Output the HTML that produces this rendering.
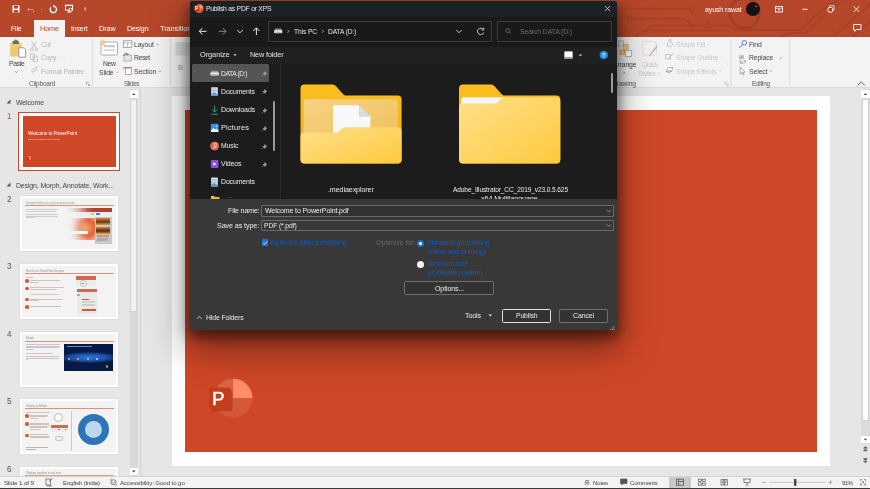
<!DOCTYPE html>
<html><head><meta charset="utf-8"><title>Publish as PDF or XPS</title>
<style>
*{box-sizing:border-box;margin:0;padding:0}
html,body{width:870px;height:489px;overflow:hidden;background:#e6e6e6;font-family:"Liberation Sans",sans-serif;font-size:7.4px;color:#444}
.abs{position:absolute}
#app{position:relative;width:870px;height:489px;overflow:hidden}
.t{position:absolute;white-space:nowrap;will-change:transform}
svg{position:absolute;overflow:visible}
</style></head><body>
<div id="app">
<div class="abs" style="left:0px;top:0px;width:870px;height:37px;background:#b7472a;"></div>
<svg style="left:600px;top:0" width="270" height="37" viewBox="600 0 270 37" fill="none" stroke="#a44027" stroke-width="1.500">
<path d="M617 8.400 H689.500"/><circle cx="692" cy="8.400" r="2.200"/>
<circle cx="629.400" cy="18.800" r="2.200"/><path d="M632 18.800 H684 L693 25.400 H706"/><circle cx="708.600" cy="25.400" r="2.200"/><path d="M711 25.400 H729 L734 30 H801 L819 12 L838 0"/>
<path d="M645 32 L652 25.400 H694"/>
<path d="M636 37 L643 30.500 H722"/>
<circle cx="744.500" cy="13" r="15" stroke-width="3"/><path d="M744.500 13 L752 5" stroke-width="2.500"/>
<path d="M780 37 L790 33 H806 L828 11 L846 0"/><path d="M833 37 L870 4"/><path d="M852 37 L870 21"/>
</svg>
<svg style="left:0;top:0" width="120" height="20" viewBox="0 0 120 20" fill="none" stroke="#fff" stroke-width="1">
<rect x="12.5" y="5.5" width="7" height="7" fill="#fff" stroke="none"/><rect x="14" y="6" width="4" height="2.6" fill="#b7472a" stroke="none"/><rect x="14" y="10" width="4" height="2.5" fill="#b7472a" stroke="none"/>
<path d="M29 8 l-1.5 1.5 1.5 1.5 M27.7 9.5 H33 a2 2 0 0 1 0 3.5" stroke="#d98a72"/>
<path d="M41 9.5 h1.5" stroke="#d98a72"/>
<path d="M54.3 6.4 a3.2 3.2 0 1 1 -3.3 0.9" stroke-width="1.3"/><path d="M53.4 4.6 l2 1.8 -2.4 0.9z" fill="#fff" stroke="none"/>
<rect x="65.5" y="5.5" width="7" height="4.6"/><path d="M64.8 5.2 H73.2 M69 10 v2.4 M67.3 13 l1.7 -1.7 1.7 1.7"/><circle cx="70.5" cy="9.8" r="1.6" fill="#b7472a"/>
<path d="M84.2 8 h2 M84.4 9.3 l0.8 0.9 0.8 -0.9" stroke-width="0.8"/>
</svg>
<div class="abs" style="left:34px;top:19.5px;width:30.5px;height:18px;background:#f3f3f3;"></div>
<span class="t" style="left:11.0px;top:25px;font-size:7.0px;line-height:7px;letter-spacing:-0.19px;color:#fff;">File</span>
<span class="t" style="left:39.5px;top:24px;font-size:7.3px;line-height:9px;letter-spacing:-0.12px;color:#b7472a;">Home</span>
<span class="t" style="left:70.5px;top:25px;font-size:7.0px;line-height:7px;letter-spacing:-0.17px;color:#fff;">Insert</span>
<span class="t" style="left:99.0px;top:24px;font-size:7.25px;line-height:9px;letter-spacing:-0.10px;color:#fff;">Draw</span>
<span class="t" style="left:127.0px;top:25px;font-size:7.1px;line-height:8px;letter-spacing:-0.10px;color:#fff;">Design</span>
<span class="t" style="left:160.0px;top:24px;font-size:7.45px;line-height:9px;letter-spacing:-0.11px;color:#fff;">Transitions</span>
<span class="t" style="left:705.0px;top:6px;font-size:7.0px;line-height:7px;letter-spacing:-0.11px;color:#fff;">ayush rawat</span>
<div class="abs" style="left:746px;top:2px;width:14px;height:14px;border-radius:50%;background:#161214"></div>
<svg style="left:740px;top:0" width="130" height="37" viewBox="0 0 130 37" fill="none" stroke="#fff" stroke-width="0.9">
<path d="M14 6 l3 -1 0 2.5z" fill="#b5402a" stroke="none"/>
<rect x="35.500" y="6.5" width="7" height="5.500"/><path d="M35.500 8.300 h7 M39 11.300 v-2 M38 10.200 l1 -1 1 1" stroke-width="0.7"/>
<path d="M62.500 9.300 h5"/>
<rect x="88" y="7.500" width="4.600" height="4.600" rx="1"/><path d="M89.500 7.300 v-1 a0.800 0.800 0 0 1 0.800 -0.800 h3 a0.800 0.800 0 0 1 0.800 0.800 v3 a0.800 0.800 0 0 1 -0.800 0.800 h-0.700" stroke-width="0.8"/>
<path d="M113.800 6.500 l5.400 5.400 M119.200 6.500 l-5.400 5.400"/>
<path d="M113.500 24.500 h7.500 v5 h-4.500 l-1.800 1.900 v-1.900 h-1.200z"/>
</svg>
<div class="abs" style="left:0px;top:37px;width:870px;height:51.2px;background:#f3f3f3;border-bottom:1px solid #dadada"></div>
<svg style="left:0;top:37px" width="200" height="52" viewBox="0 37 200 52" fill="none">
<rect x="10.200" y="42.600" width="11.400" height="14" rx="1" fill="#efc96d"/><rect x="12.600" y="40.800" width="6.400" height="3.200" rx="1" fill="#6b6b6b"/><circle cx="15.800" cy="40.800" r="1.300" fill="#6b6b6b"/>
<path d="M18.800 47.800 h4.800 l2 2 v7.400 h-6.800z" fill="#fff" stroke="#777" stroke-width="0.700"/>
<path d="M15.400 71.500 l1 1 1 -1" stroke="#555" stroke-width="0.800"/>
<path d="M31.500 41.500 l4.500 6.500 M36.500 41.500 l-4.500 6.500" stroke="#b8b8b8" stroke-width="0.900"/><circle cx="31.600" cy="49.400" r="1.300" stroke="#b8b8b8" stroke-width="0.800"/><circle cx="36.400" cy="49.400" r="1.300" stroke="#b8b8b8" stroke-width="0.800"/>
<path d="M30.500 54 h4 v5.500 h-4z M33 56 h4.500 v5.500 h-4.500z" fill="#f3f3f3" stroke="#bdbdbd" stroke-width="0.800"/>
<path d="M63.600 57.300 l0.900 0.900 0.900 -0.900" stroke="#c4c4c4" stroke-width="0.700"/>
<path d="M31.500 70.500 l4 -2.500 1.500 1.500 -4.500 3z M36 68 l2 -2" stroke="#bdbdbd" stroke-width="0.900"/>
<path d="M86.500 82.200 h2.500 M86.500 82.200 v2.500 M88 83.800 l1.600 1.600 M89.800 83.800 v1.800 h-1.800" stroke="#888" stroke-width="0.600"/>
<path d="M92.600 39 v47" stroke="#d4d4d4" stroke-width="0.800"/>
<path d="M170.600 39 v47" stroke="#d4d4d4" stroke-width="0.800"/>
<!-- new slide -->
<rect x="101" y="42" width="16.500" height="13" rx="1.200" fill="#fff" stroke="#9a9a9a" stroke-width="0.800"/><rect x="103.500" y="45" width="11.500" height="2.200" fill="#c9c9c9"/><rect x="103.500" y="49" width="11.500" height="2.200" fill="#dedede"/>
<path d="M102.700 39.700 l0.800 1.700 1.800 0.300 -1.300 1.300 0.300 1.800 -1.600 -0.900 -1.600 0.900 0.300 -1.800 -1.300 -1.300 1.800 -0.300z" fill="#f6d58a" stroke="#e8a33a" stroke-width="0.500"/>
<path d="M116.400 71.700 l0.900 0.900 0.900 -0.900" stroke="#666" stroke-width="0.700"/>
<!-- layout -->
<rect x="123.300" y="40.800" width="8.600" height="6.800" fill="#fafafa" stroke="#8a8a8a" stroke-width="0.700"/><path d="M123.300 42.800 h8.600 M127.600 42.800 v4.800" stroke="#9a9a9a" stroke-width="0.600"/>
<path d="M156.600 44 l0.900 0.900 0.900 -0.900" stroke="#666" stroke-width="0.700"/>
<!-- reset -->
<rect x="124" y="55" width="7.600" height="6" fill="#e4e4e4" stroke="#9a9a9a" stroke-width="0.700"/><path d="M123.500 56 a2.600 2.600 0 0 1 4 -2" stroke="#2a72c8" stroke-width="1"/><path d="M127.900 53 v1.800 h-1.800" stroke="#2a72c8" stroke-width="0.700"/>
<!-- section -->
<rect x="125.600" y="68" width="6" height="6.400" fill="#fff" stroke="#8a8a8a" stroke-width="0.700"/><path d="M124 67.600 h7.800" stroke="#d0603e" stroke-width="0.900"/><path d="M123.600 66.600 l0.500 1 1 0.200 -0.800 0.700 0.200 1 -0.900 -0.500 -0.900 0.500 0.200 -1 -0.800 -0.700 1 -0.200z" fill="#f0b24a"/>
<path d="M158.900 71.200 l0.900 0.900 0.900 -0.900" stroke="#666" stroke-width="0.700"/>
<rect x="175.500" y="42" width="15" height="13.500" fill="#dcdcdc"/>
</svg>
<span class="t" style="left:8.5px;top:60px;font-size:6.8px;line-height:7px;letter-spacing:-0.38px;color:#444;">Paste</span>
<span class="t" style="left:40.8px;top:41px;font-size:6.8px;line-height:7px;letter-spacing:-0.29px;color:#b4b4b4;">Cut</span>
<span class="t" style="left:40.8px;top:54px;font-size:6.8px;line-height:7px;letter-spacing:-0.17px;color:#b4b4b4;">Copy</span>
<span class="t" style="left:40.8px;top:68px;font-size:6.8px;line-height:7px;letter-spacing:-0.13px;color:#b4b4b4;">Format Painter</span>
<span class="t" style="left:28.5px;top:80px;font-size:6.45px;line-height:7px;letter-spacing:-0.15px;color:#555;">Clipboard</span>
<span class="t" style="left:103.0px;top:60px;font-size:6.8px;line-height:7px;letter-spacing:-0.37px;color:#444;">New</span>
<span class="t" style="left:98.5px;top:69px;font-size:6.8px;line-height:7px;letter-spacing:-0.12px;color:#444;">Slide</span>
<span class="t" style="left:133.8px;top:41px;font-size:6.8px;line-height:7px;letter-spacing:-0.12px;color:#444;">Layout</span>
<span class="t" style="left:133.8px;top:54px;font-size:6.8px;line-height:7px;letter-spacing:-0.39px;color:#444;">Reset</span>
<span class="t" style="left:133.8px;top:68px;font-size:6.9px;line-height:7px;letter-spacing:-0.12px;color:#444;">Section</span>
<span class="t" style="left:123.8px;top:80px;font-size:6.45px;line-height:7px;letter-spacing:-0.39px;color:#555;">Slides</span>
<span class="t" style="left:178.3px;top:63px;font-size:7.6px;line-height:9px;letter-spacing:0.00px;color:#999;">B</span>
<svg style="left:600px;top:37px" width="270" height="52" viewBox="600 37 270 52" fill="none">
<rect x="618.500" y="41" width="5" height="5" fill="#f3f3f3" stroke="#aaa" stroke-width="0.700"/><rect x="623.500" y="44.500" width="4.600" height="4.600" fill="#f6c48a" stroke="#e89a3c" stroke-width="0.700"/><rect x="620" y="50" width="4.500" height="4.500" fill="#f6c48a" stroke="#e89a3c" stroke-width="0.700"/><rect x="625.500" y="50.500" width="6" height="6" fill="#fff" stroke="#999" stroke-width="0.700"/>
<path d="M623.200 72 l0.900 0.900 0.900 -0.900" stroke="#777" stroke-width="0.700"/>
<rect x="642.500" y="41.500" width="14" height="14" rx="3" fill="#f7f1f0" stroke="#d8d8d8" stroke-width="0.800"/><path d="M648.500 57.500 l8 -9.500 1.600 -3 -2.600 2 -5 6.500z" fill="#9a9a9a" opacity="0.800"/>
<path d="M658.400 72.800 l0.900 0.900 0.900 -0.900" stroke="#bbb" stroke-width="0.700"/>
<path d="M667.500 43 l2.500 -2 3 3.500 -3 2.500 -2.500 -1z M669 41 v-1.500 h2 v2" stroke="#bdbdbd" stroke-width="0.800"/><path d="M673.800 45.500 l0.600 1.200" stroke="#bdbdbd" stroke-width="0.800"/>
<rect x="665.500" y="54.500" width="5" height="4.500" stroke="#bdbdbd" stroke-width="0.800"/><path d="M668 59 l5.500 -5.500" stroke="#bdbdbd" stroke-width="1"/>
<path d="M666.500 70 l1.500 -2.500 h5 l-1 3.500 h-5z" fill="#f3f3f3" stroke="#aaa" stroke-width="0.800"/><path d="M666 71.500 q3 2 6 -0.500" stroke="#999" stroke-width="1"/>
<path d="M707.800 44.300 l0.900 0.900 0.900 -0.900 M721.300 57.500 l0.900 0.900 0.900 -0.900 M719.400 70.600 l0.900 0.900 0.900 -0.900" stroke="#c4c4c4" stroke-width="0.700"/>
<path d="M724.800 82.200 h2.500 M724.800 82.200 v2.500 M726.300 83.800 l1.600 1.600 M728.100 83.800 v1.800 h-1.800" stroke="#aaa" stroke-width="0.600"/>
<path d="M731.200 39 v47 M789.800 39 v47" stroke="#d4d4d4" stroke-width="0.800"/>
<circle cx="744.300" cy="42.800" r="2.300" stroke="#3a78c4" stroke-width="0.900"/><path d="M742.600 44.600 l-3.300 3.300" stroke="#4a6a9a" stroke-width="1"/>
<path d="M739 60.500 l1.200 1.500 1.200 -1.500 M739 56 h5 M743.500 61 h2.500" stroke="#666" stroke-width="0.600"/><path d="M744.600 60.800 l1.200 1.200 -1.200 1.200" stroke="#2a72c8" stroke-width="0.600"/>
<path d="M740.200 67 v7.200 l1.700 -1.600 1.300 2.600 0.900 -0.500 -1.300 -2.500 h2.200z" fill="#fff" stroke="#777" stroke-width="0.600"/>
<path d="M779.800 57.700 l0.900 0.900 0.900 -0.900 M769.800 70.800 l0.900 0.900 0.900 -0.900" stroke="#666" stroke-width="0.700"/>
<path d="M857.500 85.500 l3.700 -3.700 3.700 3.700" stroke="#555" stroke-width="0.900"/>
</svg>
<span class="t" style="left:738.5px;top:55px;font-size:4px;line-height:5px;letter-spacing:0.28px;color:#666;">ab</span>
<span class="t" style="left:739.5px;top:61px;font-size:3.5px;line-height:4px;letter-spacing:0.15px;color:#2a72c8;">ac</span>
<span class="t" style="left:612.6px;top:61px;font-size:6.8px;line-height:7px;letter-spacing:-0.11px;color:#444;">Arrange</span>
<span class="t" style="left:641.8px;top:61px;font-size:6.8px;line-height:7px;letter-spacing:-0.24px;color:#c8c8c8;">Quick</span>
<span class="t" style="left:638.0px;top:70px;font-size:6.8px;line-height:7px;letter-spacing:-0.17px;color:#c8c8c8;">Styles</span>
<span class="t" style="left:676.0px;top:41px;font-size:6.8px;line-height:7px;letter-spacing:-0.12px;color:#c8c8c8;">Shape Fill</span>
<span class="t" style="left:676.0px;top:54px;font-size:6.9px;line-height:7px;letter-spacing:-0.11px;color:#c8c8c8;">Shape Outline</span>
<span class="t" style="left:676.0px;top:68px;font-size:6.8px;line-height:7px;letter-spacing:-0.13px;color:#c8c8c8;">Shape Effects</span>
<span class="t" style="left:612.0px;top:80px;font-size:6.75px;line-height:7px;letter-spacing:-0.11px;color:#555;">Drawing</span>
<span class="t" style="left:748.5px;top:41px;font-size:6.8px;line-height:7px;letter-spacing:-0.18px;color:#444;">Find</span>
<span class="t" style="left:748.5px;top:54px;font-size:6.8px;line-height:7px;letter-spacing:-0.12px;color:#444;">Replace</span>
<span class="t" style="left:748.5px;top:68px;font-size:6.9px;line-height:7px;letter-spacing:-0.11px;color:#444;">Select</span>
<span class="t" style="left:751.5px;top:80px;font-size:6.45px;line-height:7px;letter-spacing:-0.25px;color:#555;">Editing</span>
<div class="abs" style="left:0px;top:88.2px;width:141px;height:388px;background:#e6e6e6;"></div>
<div class="abs" style="left:140.4px;top:88.2px;width:0.8px;height:388px;background:#d2d2d2;"></div>
<div class="abs" style="left:129.6px;top:89px;width:8.4px;height:388px;background:#d9d9d9;"></div>
<div class="abs" style="left:129.6px;top:90px;width:8.4px;height:8px;background:#ffffff;"></div>
<div class="abs" style="left:130.4px;top:99px;width:7px;height:212.5px;background:#f2f2f2;border:0.6px solid #d0d0d0"></div>
<div class="abs" style="left:129.6px;top:467.6px;width:8.4px;height:7.8px;background:#ffffff;"></div>
<svg style="left:0;top:88px" width="141" height="388" viewBox="0 88 141 388">
<path d="M132 95 l1.800 -1.800 1.800 1.800z M132 470.600 l1.800 1.800 1.800 -1.800z" fill="#444"/>
<path d="M10.500 99.500 v4 h-4z M10.500 182.500 v4 h-4z" fill="#555"/>
</svg>
<span class="t" style="left:16.0px;top:99px;font-size:6.95px;line-height:7px;letter-spacing:-0.12px;color:#444;">Welcome</span>
<span class="t" style="left:16.0px;top:182px;font-size:6.9px;line-height:7px;letter-spacing:-0.11px;color:#444;">Design, Morph, Annotate, Work...</span>
<span class="t" style="left:7.3px;top:112px;font-size:8.2px;line-height:9px;letter-spacing:0.00px;color:#d04727;">1</span>
<span class="t" style="left:6.8px;top:195px;font-size:8.2px;line-height:9px;letter-spacing:0.00px;color:#555;">2</span>
<span class="t" style="left:6.8px;top:262px;font-size:8.2px;line-height:9px;letter-spacing:0.00px;color:#555;">3</span>
<span class="t" style="left:6.8px;top:330px;font-size:8.2px;line-height:9px;letter-spacing:0.00px;color:#555;">4</span>
<span class="t" style="left:6.8px;top:397px;font-size:8.2px;line-height:9px;letter-spacing:0.00px;color:#555;">5</span>
<span class="t" style="left:6.8px;top:465px;font-size:8.2px;line-height:9px;letter-spacing:0.00px;color:#555;">6</span>
<div class="abs" style="left:18.3px;top:111.8px;width:102px;height:58.8px;background:#fff;border:1.2px solid #d04727"></div>
<div class="abs" style="left:22.9px;top:116px;width:93.6px;height:50.6px;background:#d04727;"></div>
<span class="t" style="left:28.0px;top:131px;font-size:4.8px;line-height:5px;letter-spacing:-0.10px;color:#fff;">Welcome to PowerPoint</span>
<span class="t" style="left:28.0px;top:138px;font-size:2.4px;line-height:3px;letter-spacing:-0.03px;color:#f6d3c8;">5 tips for a simpler way to work</span>
<div class="abs" style="left:27px;top:156.300px;width:4.200px;height:4.200px;border-radius:50%;background:#ee8f72"></div><div class="abs" style="left:26.300px;top:157.200px;width:2.600px;height:2.600px;background:#b83b1d"></div>
<div class="abs" style="left:20.4px;top:196.3px;width:97.8px;height:55.2px;background:#f3f3f3;border:2px solid #fff;box-shadow:0 0 0.8px rgba(0,0,0,.25)"></div>
<span class="t" style="left:25.5px;top:201px;font-size:2.9px;line-height:4px;letter-spacing:-0.10px;color:#999;">Designer helps you get your point across</span>
<div class="abs" style="left:25.3px;top:205.4px;width:88.6px;height:0.7px;background:#de8f78;"></div>
<div class="abs" style="left:25.5px;top:209.3px;width:32px;height:0.7px;background:#cdcdcd;"></div>
<div class="abs" style="left:25.5px;top:210.8px;width:30px;height:0.7px;background:#cdcdcd;"></div>
<div class="abs" style="left:25.5px;top:214.3px;width:32.5px;height:0.7px;background:#cdcdcd;"></div>
<div class="abs" style="left:25.5px;top:215.8px;width:32px;height:0.7px;background:#cdcdcd;"></div>
<div class="abs" style="left:25.5px;top:217.3px;width:9.5px;height:0.7px;background:#cdcdcd;"></div>
<div class="abs" style="left:67px;top:208px;width:45.500px;height:35.500px;overflow:hidden;-webkit-mask-image:linear-gradient(90deg,transparent 0,#000 45%);mask-image:linear-gradient(90deg,transparent 0,#000 45%)">
<div class="abs" style="left:0;top:0;width:45px;height:3.600px;background:linear-gradient(90deg,#e9b4a4,#b5402a 60%)"></div>
<div class="abs" style="left:0;top:4px;width:45px;height:4.500px;background:#ececec"></div>
<div class="abs" style="left:24px;top:5px;width:3px;height:2px;background:#e9c454"></div><div class="abs" style="left:28.500px;top:5px;width:4px;height:2px;background:#3f86d6"></div>
<div class="abs" style="left:0;top:9.500px;width:28px;height:22px;background:radial-gradient(circle at 70% 45%,#f2a25a 0,#e3643c 35%,#e9a892 60%,#eee 90%)"></div>
<div class="abs" style="left:1px;top:22.500px;width:20px;height:3.500px;background:#fafafa"></div>
<div class="abs" style="left:27.500px;top:8.500px;width:17px;height:27px;background:#c9c9c9"></div>
<div class="abs" style="left:29px;top:10px;width:13.500px;height:7px;background:linear-gradient(#e8813a,#5d3a1c 55%,#e8a33a)"></div>
<div class="abs" style="left:29px;top:18.500px;width:13.500px;height:7px;background:linear-gradient(#e8813a,#4a2a14 55%,#e8a33a)"></div>
<div class="abs" style="left:30px;top:27px;width:12px;height:2px;background:#d88a76"></div>
<div class="abs" style="left:30px;top:30px;width:11px;height:3px;background:#a9a9a9"></div>
</div>
<div class="abs" style="left:20.4px;top:263.5px;width:97.8px;height:55.6px;background:#f3f3f3;border:2px solid #fff;box-shadow:0 0 0.8px rgba(0,0,0,.25)"></div>
<span class="t" style="left:25.5px;top:269px;font-size:2.85px;line-height:4px;letter-spacing:-0.11px;color:#999;">How to use PowerPoint Designer</span>
<div class="abs" style="left:25.3px;top:273.2px;width:88.6px;height:0.7px;background:#de8f78;"></div>
<div class="abs" style="left:25.5px;top:277.0px;width:7px;height:0.7px;background:#c6c6c6;"></div>
<div class="abs" style="left:25.300px;top:279.3px;width:3.400px;height:3.400px;border-radius:50%;background:#d8572f"></div>
<div class="abs" style="left:30px;top:280.1px;width:30px;height:0.7px;background:#d2c0ba;"></div>
<div class="abs" style="left:30px;top:281.6px;width:8px;height:0.7px;background:#d2c0ba;"></div>
<div class="abs" style="left:25.300px;top:286.6px;width:3.400px;height:3.400px;border-radius:50%;background:#d8572f"></div>
<div class="abs" style="left:30px;top:287.40000000000003px;width:34px;height:0.7px;background:#d2c0ba;"></div>
<div class="abs" style="left:30px;top:288.90000000000003px;width:26px;height:0.7px;background:#d2c0ba;"></div>
<div class="abs" style="left:25.300px;top:297.8px;width:3.400px;height:3.400px;border-radius:50%;background:#d8572f"></div>
<div class="abs" style="left:30px;top:298.6px;width:32px;height:0.7px;background:#d2c0ba;"></div>
<div class="abs" style="left:30px;top:300.1px;width:8px;height:0.7px;background:#d2c0ba;"></div>
<div class="abs" style="left:25.300px;top:305.3px;width:3.400px;height:3.400px;border-radius:50%;background:#d8572f"></div>
<div class="abs" style="left:30px;top:306.1px;width:31px;height:0.7px;background:#d2c0ba;"></div>
<div class="abs" style="left:30px;top:293.5px;width:29px;height:0.7px;background:#d6c6c0;"></div>
<div class="abs" style="left:76px;top:276.200px;width:19.500px;height:3.600px;background:#cf6a4c"></div>
<div class="abs" style="left:76px;top:279.800px;width:19.500px;height:6.500px;background:#ebebeb"></div>
<div class="abs" style="left:79.500px;top:279.500px;width:7.400px;height:7.400px;border-radius:50%;background:#f7f7f7;border:0.500px solid #bbb"></div>
<div class="abs" style="left:82.300px;top:282.800px;width:2px;height:0.800px;background:#3f86d6"></div>
<div class="abs" style="left:77px;top:289px;width:20px;height:25px;background:#e9e9e9"></div>
<div class="abs" style="left:77px;top:289px;width:20px;height:3.200px;background:#cf6a4c"></div>
<div class="abs" style="left:77px;top:293.500px;width:2.500px;height:2.500px;background:#7fb2e5"></div>
<div class="abs" style="left:81.500px;top:298.500px;width:7px;height:0.800px;background:#d8572f"></div>
<div class="abs" style="left:81.500px;top:301px;width:13px;height:1.600px;background:#d0d0d0"></div>
<div class="abs" style="left:81.500px;top:304px;width:13px;height:1.600px;background:#d0d0d0"></div>
<div class="abs" style="left:81.500px;top:309px;width:14px;height:2px;background:#d8572f"></div>
<div class="abs" style="left:20.4px;top:331.5px;width:97.8px;height:55.2px;background:#f3f3f3;border:2px solid #fff;box-shadow:0 0 0.8px rgba(0,0,0,.25)"></div>
<span class="t" style="left:25.5px;top:336px;font-size:3.0px;line-height:4px;letter-spacing:-0.10px;color:#999;">Morph</span>
<div class="abs" style="left:25.3px;top:340.9px;width:88.6px;height:0.7px;background:#de8f78;"></div>
<div class="abs" style="left:25.5px;top:344.0px;width:34px;height:0.7px;background:#c8c8c8;"></div>
<div class="abs" style="left:25.5px;top:345.6px;width:33px;height:0.7px;background:#c8c8c8;"></div>
<div class="abs" style="left:25.5px;top:347.2px;width:34px;height:0.7px;background:#c8c8c8;"></div>
<div class="abs" style="left:25.5px;top:348.8px;width:8px;height:0.7px;background:#c8c8c8;"></div>
<div class="abs" style="left:25.5px;top:353.0px;width:27px;height:0.7px;background:#dcc0b6;"></div>
<div class="abs" style="left:25.5px;top:356.2px;width:33px;height:0.7px;background:#c8c8c8;"></div>
<div class="abs" style="left:25.5px;top:357.8px;width:33px;height:0.7px;background:#c8c8c8;"></div>
<div class="abs" style="left:25.5px;top:359.4px;width:2.5px;height:0.7px;background:#c8c8c8;"></div>
<div class="abs" style="left:64px;top:343.800px;width:49px;height:27.500px;background:#071a45;overflow:hidden">
<div class="abs" style="left:-4px;top:8.500px;width:58px;height:11px;border-radius:50%;background:radial-gradient(ellipse at center,#2f7bd8 0,#1a4fa8 45%,rgba(10,30,90,0) 75%)"></div>
<div class="abs" style="left:3px;top:2px;width:25px;height:0.800px;background:#6f86b8"></div>
<div class="abs" style="left:3.500px;top:14px;width:2.200px;height:2.200px;border-radius:50%;background:#e8a05a"></div>
<div class="abs" style="left:12.500px;top:14px;width:2.400px;height:2.400px;border-radius:50%;background:#f0a860"></div>
<div class="abs" style="left:22.500px;top:14px;width:2.400px;height:2.400px;border-radius:50%;background:#f2b26a"></div>
<div class="abs" style="left:31.500px;top:14px;width:2.200px;height:2.200px;border-radius:50%;background:#cfd8ee"></div>
<div class="abs" style="left:42px;top:21.500px;width:2.200px;height:3.200px;border-radius:40%;background:#d8893e"></div>
</div>
<div class="abs" style="left:20.4px;top:398.6px;width:97.8px;height:55.6px;background:#f3f3f3;border:2px solid #fff;box-shadow:0 0 0.8px rgba(0,0,0,.25)"></div>
<span class="t" style="left:25.5px;top:404px;font-size:3.0px;line-height:4px;letter-spacing:-0.12px;color:#999;">Setting up Morph</span>
<div class="abs" style="left:25.3px;top:408px;width:88.6px;height:0.7px;background:#de8f78;"></div>
<div class="abs" style="left:25.5px;top:411.8px;width:24px;height:0.7px;background:#c6c6c6;"></div>
<div class="abs" style="left:25.300px;top:414.3px;width:3.400px;height:3.400px;border-radius:50%;background:#d8572f"></div>
<div class="abs" style="left:30px;top:414.8px;width:18px;height:0.7px;background:#d2c0ba;"></div>
<div class="abs" style="left:30px;top:416.3px;width:17px;height:0.7px;background:#d2c0ba;"></div>
<div class="abs" style="left:30px;top:417.8px;width:8px;height:0.7px;background:#d2c0ba;"></div>
<div class="abs" style="left:25.300px;top:422.3px;width:3.400px;height:3.400px;border-radius:50%;background:#d8572f"></div>
<div class="abs" style="left:30px;top:422.8px;width:19px;height:0.7px;background:#d2c0ba;"></div>
<div class="abs" style="left:30px;top:424.3px;width:19px;height:0.7px;background:#d2c0ba;"></div>
<div class="abs" style="left:30px;top:425.8px;width:19px;height:0.7px;background:#d2c0ba;"></div>
<div class="abs" style="left:30px;top:427.3px;width:17px;height:0.7px;background:#d2c0ba;"></div>
<div class="abs" style="left:30px;top:428.8px;width:11px;height:0.7px;background:#d2c0ba;"></div>
<div class="abs" style="left:25.300px;top:433.8px;width:3.400px;height:3.400px;border-radius:50%;background:#d8572f"></div>
<div class="abs" style="left:30px;top:434.3px;width:18px;height:0.7px;background:#d2c0ba;"></div>
<div class="abs" style="left:30px;top:435.8px;width:20px;height:0.7px;background:#d2c0ba;"></div>
<div class="abs" style="left:30px;top:437.3px;width:19px;height:0.7px;background:#d2c0ba;"></div>
<div class="abs" style="left:26px;top:447.0px;width:22px;height:0.7px;background:#c6b2ac;"></div>
<div class="abs" style="left:26px;top:448.5px;width:10px;height:0.7px;background:#c6b2ac;"></div>
<div class="abs" style="left:71px;top:411px;width:0.6px;height:39.5px;background:#c8c8c8;"></div>
<div class="abs" style="left:53.500px;top:412.500px;width:9.500px;height:9.500px;border-radius:50%;border:0.600px solid #bdbdbd;background:#f8f8f8"></div>
<div class="abs" style="left:50.500px;top:425.300px;width:17.500px;height:2.600px;background:#cf6a4c"></div>
<div class="abs" style="left:50.500px;top:428px;width:17.500px;height:4px;background:#ececec"></div>
<div class="abs" style="left:58px;top:429px;width:1.500px;height:1.200px;background:#3f86d6"></div><div class="abs" style="left:64.500px;top:429px;width:1.500px;height:1.200px;background:#3f86d6"></div>
<div class="abs" style="left:55px;top:436px;width:8px;height:4.500px;border-radius:50%;border:0.500px solid #c4c4c4"></div>
<div class="abs" style="left:78.200px;top:413.800px;width:31px;height:31px;border-radius:50%;background:#2e75b6"></div>
<div class="abs" style="left:85px;top:420.600px;width:17.400px;height:17.400px;border-radius:50%;background:#bdd7ee"></div>
<div class="abs" style="left:20.4px;top:466.5px;width:97.8px;height:20px;background:#f3f3f3;border:2px solid #fff;box-shadow:0 0 0.8px rgba(0,0,0,.25)"></div>
<span class="t" style="left:25.5px;top:471px;font-size:3.0px;line-height:4px;letter-spacing:-0.11px;color:#999;">Working together in real time</span>
<div class="abs" style="left:25.3px;top:475.4px;width:88.6px;height:0.9px;background:#e39c88;"></div>
<div class="abs" style="left:141.2px;top:88.2px;width:729px;height:388px;background:#e6e6e6;"></div>
<div class="abs" style="left:172px;top:96px;width:658.3px;height:370px;background:#fff;"></div>
<div class="abs" style="left:185.4px;top:110px;width:631.2px;height:341.7px;background:#d04727;"></div>
<svg style="left:200px;top:370px" width="70" height="60" viewBox="200 370 70 60">
<circle cx="233.200" cy="398" r="19.200" fill="#dc6444"/>
<path d="M233.200 378.800 a19.200 19.200 0 0 1 19.200 19.200 h-19.200z" fill="#ff8f6b"/>
<path d="M252.400 398 a19.200 19.200 0 0 1 -38.400 0z" fill="#d4583a"/>
<rect x="211.300" y="390" width="21.300" height="21.300" rx="1.500" fill="#8f2a12" opacity="0.450"/>
<rect x="209.100" y="387.600" width="21.500" height="21.300" rx="1.500" fill="#c43e1c"/>
</svg>
<span class="t" style="left:211.6px;top:388px;font-size:18.8px;line-height:21px;letter-spacing:0.00px;color:#fff;-webkit-text-stroke:0.450px #fff">P</span>
<div class="abs" style="left:861.2px;top:89px;width:8.4px;height:388px;background:#dcdcdc;"></div>
<div class="abs" style="left:861.2px;top:90px;width:8.4px;height:8px;background:#fff;"></div>
<div class="abs" style="left:862px;top:99px;width:7px;height:322px;background:#ffffff;border:0.6px solid #d0d0d0"></div>
<div class="abs" style="left:861.2px;top:436px;width:8.4px;height:7.4px;background:#fff;"></div>
<div class="abs" style="left:861.2px;top:443.6px;width:8.4px;height:33px;background:#e6e6e6;"></div>
<svg style="left:850px;top:88px" width="20" height="388" viewBox="850 88 20 388">
<path d="M863.600 95 l1.800 -1.800 1.800 1.800z M863.600 438.800 l1.800 1.800 1.800 -1.800z" fill="#444"/>
<path d="M863.500 448.200 l1.900 -1.600 1.900 1.600z M863.500 450.600 l1.900 -1.600 1.900 1.600z M863.500 451 h3.800" fill="#555" stroke="#555" stroke-width="0.500"/>
<path d="M863.500 458.800 l1.900 1.600 1.900 -1.600z M863.500 461.200 l1.900 1.600 1.900 -1.600z M863.500 458.400 h3.800" fill="#555" stroke="#555" stroke-width="0.500"/>
</svg>
<div class="abs" style="left:0px;top:476.3px;width:870px;height:12.7px;background:#f3f3f3;border-top:0.8px solid #d4d4d4"></div>
<div class="abs" style="left:0px;top:487.6px;width:870px;height:1.4px;background:#3a3a3a;"></div>
<span class="t" style="left:4.0px;top:479px;font-size:6.25px;line-height:7px;letter-spacing:-0.11px;color:#444;">Slide 1 of 9</span>
<span class="t" style="left:63.0px;top:479px;font-size:6.1px;line-height:7px;letter-spacing:-0.13px;color:#444;">English (India)</span>
<span class="t" style="left:120.0px;top:479px;font-size:6.2px;line-height:7px;letter-spacing:-0.12px;color:#444;">Accessibility: Good to go</span>
<span class="t" style="left:593.0px;top:479px;font-size:6.1px;line-height:7px;letter-spacing:-0.19px;color:#444;">Notes</span>
<span class="t" style="left:630.0px;top:479px;font-size:6.1px;line-height:7px;letter-spacing:-0.25px;color:#444;">Comments</span>
<span class="t" style="left:841.5px;top:479px;font-size:6.1px;line-height:7px;letter-spacing:-0.60px;color:#444;">91%</span>
<div class="abs" style="left:669px;top:477px;width:21.5px;height:10.7px;background:#c9c9c9;"></div>
<svg style="left:0;top:476px" width="870" height="13" viewBox="0 476 870 13" fill="none" stroke="#555" stroke-width="0.700">
<rect x="46" y="479" width="4.500" height="6"/><path d="M49 481.500 l3.500 -3 M47 486 h5"/>
<circle cx="113.500" cy="482.300" r="2.600"/><path d="M112.300 482.400 l1 1 1.600 -1.800 M110.300 480.200 l1 -1.400 M116.800 484.500 l-0.800 1.300"/>
<path d="M584.500 484 h5 M585.300 482.500 h3.400 l-0.500 -2 h-2.400z"/>
<path d="M620.500 479 h6.500 v4.400 h-3.500 l-1.600 1.600 v-1.600 h-1.400z" fill="#555"/>
<rect x="676.500" y="479.200" width="7" height="6" stroke="#444"/><path d="M678.500 479.200 v6 M678.500 481.500 h5" stroke="#444"/>
<rect x="698.500" y="479.200" width="2.800" height="2.300"/><rect x="702.700" y="479.200" width="2.800" height="2.300"/><rect x="698.500" y="483" width="2.800" height="2.300"/><rect x="702.700" y="483" width="2.800" height="2.300"/>
<path d="M721 479.500 h3.200 v5.500 h-3.200z M724.200 479.500 h3.200 v5.500 h-3.200z M722 481 h1.400 M722 482.500 h1.400 M725.200 481 h1.400 M725.200 482.500 h1.400"/>
<path d="M743 479 h8 M744 479 v3.600 h6 v-3.600 M747 482.600 v2 M745.500 486 l1.500 -1.400 1.500 1.400"/>
<path d="M762 482.300 h4" stroke="#888"/><path d="M770 482.300 h55.500" stroke="#a8a8a8" stroke-width="0.600"/><path d="M828.500 482.300 h4 M830.500 480.300 v4" stroke="#888"/>
<rect x="794" y="479" width="2.400" height="6.800" fill="#444" stroke="none"/>
<path d="M860.500 481 v-1.500 h1.500 M864 479.500 h1.500 v1.500 M865.500 483.500 v1.500 h-1.500 M862 485 h-1.500 v-1.500 M862 481 l2 2.500 M864 481 l-2 2.500" stroke-width="0.600"/>
</svg>
<div class="abs" style="left:190.400px;top:0.800px;width:426.500px;height:329.400px;background:#1c1c1c;border-radius:2.500px 2.500px 4px 4px;box-shadow:0 6px 12px 2px rgba(0,0,0,.45),0 16px 36px 4px rgba(0,0,0,.42);overflow:hidden">
<div class="abs" style="left:0;top:0;width:427px;height:16.400px;background:#1c2126"></div>
<div class="abs" style="left:0;top:16.400px;width:427px;height:29.600px;background:#191919"></div>
<div class="abs" style="left:0;top:46px;width:427px;height:17.400px;background:#202020"></div>
<div class="abs" style="left:0;top:63.400px;width:427px;height:135px;background:#1c1c1c"></div>
<div class="abs" style="left:0;top:198px;width:427px;height:132px;background:#383838"></div>
</div>
<div class="abs" style="left:268.3px;top:21.2px;width:223.5px;height:20.6px;background:#191919;border:0.8px solid #3c3c3c;border-radius:1px"></div>
<div class="abs" style="left:497.3px;top:21.2px;width:114.6px;height:20.6px;background:#191919;border:0.8px solid #3c3c3c;border-radius:1px"></div>
<svg style="left:190px;top:0" width="427" height="70" viewBox="190 0 427 70" fill="none">
<circle cx="199.200" cy="8.600" r="4.300" fill="#e2583a"/><path d="M199.200 4.300 a4.300 4.300 0 0 1 4.300 4.300 h-4.300z" fill="#ff8f6b"/><rect x="194.300" y="6" width="5" height="5.200" rx="0.600" fill="#c43e1c"/>
<path d="M206.500 31.300 h-7.200 M202.500 28 l-3.300 3.300 3.300 3.300" stroke="#eee" stroke-width="1"/>
<path d="M218.800 31.300 h7.200 M222.800 28 l3.300 3.300 -3.300 3.300" stroke="#8a8a8a" stroke-width="1"/>
<path d="M237.200 30 l2.800 2.800 2.800 -2.800" stroke="#ddd" stroke-width="1"/>
<path d="M256.400 35 v-7 M253.200 31 l3.200 -3.200 3.200 3.200" stroke="#eee" stroke-width="1"/>
<path d="M274.200 30.400 l1.200 -1.900 h5.600 l1.200 1.900 v2.600 h-8z" fill="#8e8e8e"/><rect x="274.200" y="30.200" width="8" height="3" rx="0.800" fill="#e8e8e8"/><path d="M275.200 32.300 h6" stroke="#777" stroke-width="0.500"/>
<path d="M287.500 29.800 l1.500 1.500 -1.500 1.500 M322 29.800 l1.500 1.500 -1.500 1.500" stroke="#ccc" stroke-width="0.700"/>
<path d="M456.300 30 l2.700 2.700 2.700 -2.700" stroke="#ddd" stroke-width="0.900"/>
<path d="M483.300 29.600 a3.200 3.200 0 1 0 0.400 2.800" stroke="#ddd" stroke-width="0.900"/><path d="M483.800 27.600 v2.300 h-2.300" stroke="#ddd" stroke-width="0.800"/>
<circle cx="507.800" cy="30.500" r="2" stroke="#777" stroke-width="0.700"/><path d="M509.200 32 l1.800 1.800" stroke="#777" stroke-width="0.700"/>
<path d="M605 6 l5 5 M610 6 l-5 5" stroke="#ddd" stroke-width="0.800"/>
<path d="M233.300 54.300 l1.700 1.900 1.700 -1.900z" fill="#ccc"/>
<rect x="564.500" y="51.500" width="8" height="7" rx="0.500" fill="#fff" stroke="#bbb" stroke-width="0.600"/><rect x="564.500" y="57" width="8" height="1.500" fill="#999"/>
<path d="M578.700 54.500 l1.700 1.900 1.700 -1.900z" fill="#ccc"/>
<circle cx="603.800" cy="55" r="4.300" fill="#1f7fe0"/><circle cx="603.800" cy="55" r="3" fill="#3b97ef"/>
</svg>
<span class="t" style="left:602.4px;top:52px;font-size:5.5px;line-height:6px;letter-spacing:0.00px;color:#d6ecff;font-weight:bold">?</span>
<span class="t" style="left:195.3px;top:6px;font-size:4.6px;line-height:5px;letter-spacing:0.00px;color:#fff;font-weight:bold">P</span>
<span class="t" style="left:205.8px;top:5px;font-size:6.8px;line-height:7px;letter-spacing:-0.24px;color:#ececec;">Publish as PDF or XPS</span>
<span class="t" style="left:293.5px;top:28px;font-size:6.7px;line-height:7px;letter-spacing:-0.12px;color:#e6e6e6;">This PC</span>
<span class="t" style="left:328.2px;top:28px;font-size:6.65px;line-height:7px;letter-spacing:-0.11px;color:#e6e6e6;">DATA (D:)</span>
<span class="t" style="left:520.0px;top:28px;font-size:6.85px;line-height:7px;letter-spacing:-0.11px;color:#6e6e6e;">Search DATA (D:)</span>
<span class="t" style="left:200.0px;top:50px;font-size:7.4px;line-height:9px;letter-spacing:-0.07px;color:#e6e6e6;">Organize</span>
<span class="t" style="left:250.0px;top:50px;font-size:7.25px;line-height:9px;letter-spacing:-0.12px;color:#e6e6e6;">New folder</span>
<div class="abs" style="left:192px;top:64.3px;width:76.8px;height:17.8px;background:#555555;border-radius:1.500px"></div>
<div class="abs" style="left:280px;top:63.5px;width:0.7px;height:134.5px;background:#2c2c2c;"></div>
<div class="abs" style="left:273px;top:101px;width:2.4px;height:49.5px;background:#9a9a9a;border-radius:1.200px"></div>
<div class="abs" style="left:611px;top:73px;width:2.4px;height:19.5px;background:#9a9a9a;border-radius:1.200px"></div>
<span class="t" style="left:221.3px;top:70px;font-size:6.65px;line-height:7px;letter-spacing:-0.35px;color:#ececec;">DATA (D:)</span>
<span class="t" style="left:221.3px;top:88px;font-size:6.9px;line-height:7px;letter-spacing:-0.10px;color:#ececec;">Documents</span>
<span class="t" style="left:221.3px;top:106px;font-size:7.1px;line-height:8px;letter-spacing:-0.10px;color:#ececec;">Downloads</span>
<span class="t" style="left:221.3px;top:123px;font-size:7.4px;line-height:9px;letter-spacing:0.18px;color:#ececec;">Pictures</span>
<span class="t" style="left:221.3px;top:142px;font-size:6.8px;line-height:7px;letter-spacing:-0.11px;color:#ececec;">Music</span>
<span class="t" style="left:221.3px;top:160px;font-size:6.95px;line-height:7px;letter-spacing:-0.10px;color:#ececec;">Videos</span>
<span class="t" style="left:221.3px;top:178px;font-size:6.9px;line-height:7px;letter-spacing:-0.10px;color:#ececec;">Documents</span>
<svg style="left:191px;top:60.300px" width="100" height="140" viewBox="190 60 100 140" fill="none">
<path d="M209.600 72.600 l1.200 -1.900 h5.800 l1.200 1.900 v2.600 h-8.200z" fill="#9a9a9a"/><rect x="209.600" y="72.400" width="8.200" height="3" rx="0.800" fill="#f0f0f0"/><path d="M210.600 74.500 h6.200" stroke="#777" stroke-width="0.500"/>
<g id="doc1"><rect x="210.200" y="87.200" width="6.600" height="8.800" rx="0.600" fill="#dfe6ee"/><path d="M211.300 89 h4.400 M211.300 90.500 h4.400 M211.300 92 h4.400" stroke="#7c9cc2" stroke-width="0.600"/><path d="M210.200 94 l3 -1.500 3.600 2 v1.500 h-6.600z" fill="#5f97d6"/></g>
<path d="M213.600 105.500 v6.300 M211 109.400 l2.600 2.600 2.600 -2.600" stroke="#2fb58a" stroke-width="0.900"/><path d="M210.400 114.200 h6.400" stroke="#2fb58a" stroke-width="0.900"/>
<rect x="209.800" y="123.800" width="7.800" height="8.200" rx="0.800" fill="#3c8fe6"/><path d="M209.800 130.800 l2.600 -2.800 1.800 1.600 1.300 -1.100 2.100 2.300 v0.400 a0.800 0.800 0 0 1 -0.800 0.800 h-6.200 a0.800 0.800 0 0 1 -0.800 -0.800z" fill="#eef6ff"/><circle cx="215.500" cy="126.300" r="0.800" fill="#eef6ff"/>
<circle cx="213.600" cy="146" r="4" fill="#e4573d"/><circle cx="213.600" cy="146" r="4" stroke="#f0a070" stroke-width="0.600"/><path d="M213.200 147.800 v-4 l2 -0.500 v3.600" stroke="#fff" stroke-width="0.600"/><circle cx="212.600" cy="147.800" r="0.700" fill="#fff"/><circle cx="214.600" cy="146.900" r="0.700" fill="#fff"/>
<rect x="209.800" y="160" width="7.600" height="8" rx="1" fill="#8a4fe0"/><path d="M212.400 162.200 l3 1.800 -3 1.800z" fill="#fff"/>
<g><rect x="210.200" y="177.600" width="6.600" height="8.800" rx="0.600" fill="#dfe6ee"/><path d="M211.300 179.400 h4.400 M211.300 180.900 h4.400 M211.300 182.400 h4.400" stroke="#7c9cc2" stroke-width="0.600"/><path d="M210.200 184.400 l3 -1.500 3.600 2 v1.500 h-6.600z" fill="#5f97d6"/></g>
<path d="M210 196 h3 l1 1 h4.500 v2 h-8.500z" fill="#f2b632"/>
</svg>
<svg style="left:261px;top:69.9px" width="7" height="7" viewBox="0 0 7 7" fill="none"><path d="M3.600 0.800 l2.600 2.600 -0.700 0.300 -1 1 -0.300 1.300 -2.800 -2.800 1.300 -0.300 1 -1z" fill="#9a9a9a"/><path d="M2.600 4.400 l-1.900 1.900" stroke="#9a9a9a" stroke-width="0.600"/></svg>
<svg style="left:261px;top:88.1px" width="7" height="7" viewBox="0 0 7 7" fill="none"><path d="M3.600 0.800 l2.600 2.600 -0.700 0.300 -1 1 -0.300 1.300 -2.800 -2.800 1.300 -0.300 1 -1z" fill="#9a9a9a"/><path d="M2.600 4.400 l-1.900 1.900" stroke="#9a9a9a" stroke-width="0.600"/></svg>
<svg style="left:261px;top:106.5px" width="7" height="7" viewBox="0 0 7 7" fill="none"><path d="M3.600 0.800 l2.600 2.600 -0.700 0.300 -1 1 -0.300 1.300 -2.800 -2.800 1.300 -0.300 1 -1z" fill="#9a9a9a"/><path d="M2.600 4.400 l-1.900 1.900" stroke="#9a9a9a" stroke-width="0.600"/></svg>
<svg style="left:261px;top:124.5px" width="7" height="7" viewBox="0 0 7 7" fill="none"><path d="M3.600 0.800 l2.600 2.600 -0.700 0.300 -1 1 -0.300 1.300 -2.800 -2.800 1.300 -0.300 1 -1z" fill="#9a9a9a"/><path d="M2.600 4.400 l-1.900 1.900" stroke="#9a9a9a" stroke-width="0.600"/></svg>
<svg style="left:261px;top:142.5px" width="7" height="7" viewBox="0 0 7 7" fill="none"><path d="M3.600 0.800 l2.600 2.600 -0.700 0.300 -1 1 -0.300 1.300 -2.800 -2.800 1.300 -0.300 1 -1z" fill="#9a9a9a"/><path d="M2.600 4.400 l-1.900 1.900" stroke="#9a9a9a" stroke-width="0.600"/></svg>
<svg style="left:261px;top:160.5px" width="7" height="7" viewBox="0 0 7 7" fill="none"><path d="M3.600 0.800 l2.600 2.600 -0.700 0.300 -1 1 -0.300 1.300 -2.800 -2.800 1.300 -0.300 1 -1z" fill="#9a9a9a"/><path d="M2.600 4.400 l-1.900 1.900" stroke="#9a9a9a" stroke-width="0.600"/></svg>
<span class="t" style="left:228.0px;top:193px;font-size:5px;line-height:6px;letter-spacing:0.00px;color:#aaa;">...</span>
<svg style="left:290px;top:80px" width="290" height="90" viewBox="290 80 290 90">
<defs>
<linearGradient id="fg1" x1="0" y1="0" x2="1" y2="1"><stop offset="0" stop-color="#ffe08a"/><stop offset="1" stop-color="#fdc93f"/></linearGradient>
<linearGradient id="fg2" x1="0" y1="0" x2="0" y2="1"><stop offset="0" stop-color="#fcbf1e"/><stop offset="1" stop-color="#f0a91a"/></linearGradient>
<linearGradient id="fg3" x1="0" y1="0" x2="1" y2="1"><stop offset="0" stop-color="#f6d283"/><stop offset="1" stop-color="#efc05a"/></linearGradient>
</defs>
<!-- folder 1 (open with doc) -->
<path d="M300.500 88.500 a4 4 0 0 1 4 -4 h26.500 c4 0 5 1.500 7 4 l5 5.500 c1 1 2 1.500 4 1.500 h50.600 a4 4 0 0 1 4 4 v60 a4 4 0 0 1 -4 4 h-93.100 a4 4 0 0 1 -4 -4z" fill="url(#fg2)"/>
<rect x="303.700" y="99.300" width="94" height="50" rx="2.500" fill="url(#fg3)"/>
<path d="M333 105.300 h26.400 l11 11 v31 h-37.400z" fill="#f8f8f8"/><path d="M359.400 105.300 v11 h11z" fill="#dcdcdc" stroke="#c4c4c4" stroke-width="0.500"/>
<path d="M300.500 136.500 a4 4 0 0 1 4 -4 h30 c2 0 3.200 -0.600 4.400 -1.600 l2.600 -2 c1.200 -1 2.400 -1.600 4.400 -1.600 h51.700 a4 4 0 0 1 4 4 v28.300 a4 4 0 0 1 -4 4 h-93.100 a4 4 0 0 1 -4 -4z" fill="url(#fg1)"/>
<!-- folder 2 (closed) -->
<path d="M459 88.500 a4 4 0 0 1 4 -4 h26.500 c4 0 5 1.500 7 4 l5 5.500 c1 1 2 1.500 4 1.500 h50.800 a4 4 0 0 1 4 4 v60 a4 4 0 0 1 -4 4 h-93.300 a4 4 0 0 1 -4 -4z" fill="url(#fg2)"/>
<path d="M461.200 100 a2.700 2.700 0 0 1 2.700 -2.700 h41 l-4.500 6.700 h-39.200z" fill="#f4f4f4"/>
<path d="M459 107.500 a4 4 0 0 1 4 -4 h31 c2 0 3.200 -0.600 4.400 -1.800 l2.400 -2.600 c1.200 -1.200 2.400 -1.800 4.400 -1.800 h51.100 a4 4 0 0 1 4 4 v58.300 a4 4 0 0 1 -4 4 h-93.300 a4 4 0 0 1 -4 -4z" fill="url(#fg1)"/>
</svg>
<span class="t" style="left:328.3px;top:186px;font-size:7.15px;line-height:8px;letter-spacing:-0.11px;color:#ececec;">.mediaexplorer</span>
<span class="t" style="left:452.5px;top:186px;font-size:6.55px;line-height:7px;letter-spacing:-0.10px;color:#ececec;">Adobe_Illustrator_CC_2019_v23.0.5.625</span>
<div class="abs" style="left:440px;top:194px;width:140px;height:4.500px;overflow:hidden">
<span class="t" style="left:41px;top:0.500px;font-size:7.200px;line-height:8.600px;color:#ececec;letter-spacing:-0.100px">x64 Multilanguage</span></div>
<div class="abs" style="left:261px;top:205.2px;width:353.3px;height:11.4px;background:#333333;border:0.8px solid #6a6a6a;border-radius:1px"></div>
<div class="abs" style="left:261px;top:219.7px;width:353.3px;height:11px;background:#383838;border:0.8px solid #6a6a6a;border-radius:1px"></div>
<span class="t" style="left:227.5px;top:207px;font-size:7.0px;line-height:7px;letter-spacing:-0.12px;color:#ececec;">File name:</span>
<span class="t" style="left:216.8px;top:221px;font-size:7.2px;line-height:9px;letter-spacing:-0.11px;color:#ececec;">Save as type:</span>
<span class="t" style="left:264.5px;top:207px;font-size:7.0px;line-height:7px;letter-spacing:-0.11px;color:#ececec;">Welcome to PowerPoint.pdf</span>
<span class="t" style="left:263.5px;top:222px;font-size:6.75px;line-height:7px;letter-spacing:-0.11px;color:#ececec;">PDF (*.pdf)</span>
<div class="abs" style="left:261.6px;top:239.4px;width:6.8px;height:6.8px;background:#1f6fd6;border-radius:1px"></div>
<span class="t" style="left:270.0px;top:238px;font-size:7.2px;line-height:9px;letter-spacing:-0.10px;color:#1759b8;">Open file after publishing</span>
<span class="t" style="left:375.5px;top:238px;font-size:7.2px;line-height:9px;letter-spacing:-0.10px;color:#686868;">Optimize for:</span>
<div class="abs" style="left:417.200px;top:239.600px;width:7px;height:7px;border-radius:50%;background:#1f6fd6"></div><div class="abs" style="left:419.200px;top:241.600px;width:3px;height:3px;border-radius:50%;background:#fff"></div>
<div class="abs" style="left:417.200px;top:260.900px;width:7px;height:7px;border-radius:50%;background:#f4f4f4"></div>
<span class="t" style="left:426.5px;top:239px;font-size:7.05px;line-height:7px;letter-spacing:-0.11px;color:#1759b8;">Standard (publishing</span>
<span class="t" style="left:426.5px;top:247px;font-size:7.2px;line-height:9px;letter-spacing:-0.11px;color:#1759b8;">online and printing)</span>
<span class="t" style="left:426.5px;top:260px;font-size:6.9px;line-height:7px;letter-spacing:-0.10px;color:#1759b8;">Minimum size</span>
<span class="t" style="left:426.5px;top:269px;font-size:7.1px;line-height:8px;letter-spacing:-0.11px;color:#1759b8;">(publishing online)</span>
<div class="abs" style="left:404px;top:281px;width:89.6px;height:14px;background:#333333;border:0.9px solid #6e6e6e;border-radius:1.500px"></div>
<span class="t" style="left:434.5px;top:285px;font-size:7.05px;line-height:7px;letter-spacing:-0.12px;color:#ececec;">Options...</span>
<span class="t" style="left:206.0px;top:314px;font-size:6.85px;line-height:7px;letter-spacing:-0.11px;color:#ececec;">Hide Folders</span>
<span class="t" style="left:464.5px;top:312px;font-size:7.1px;line-height:8px;letter-spacing:-0.11px;color:#ececec;">Tools</span>
<div class="abs" style="left:502.2px;top:308.7px;width:48.8px;height:14.2px;background:#333333;border:1px solid #e0e0e0;border-radius:1.500px"></div>
<div class="abs" style="left:558.6px;top:308.7px;width:49.2px;height:14.2px;background:#333333;border:0.9px solid #707070;border-radius:1.500px"></div>
<span class="t" style="left:516.0px;top:312px;font-size:6.8px;line-height:7px;letter-spacing:-0.11px;color:#ececec;">Publish</span>
<span class="t" style="left:573.0px;top:312px;font-size:6.95px;line-height:7px;letter-spacing:-0.11px;color:#ececec;">Cancel</span>
<svg style="left:190px;top:200px" width="427" height="131" viewBox="190 200 427 131" fill="none">
<path d="M606.500 209.800 l2.300 2.300 2.300 -2.300 M606.500 224.200 l2.300 2.300 2.300 -2.300" stroke="#aaa" stroke-width="0.700"/>
<path d="M263 242.800 l1.500 1.600 2.600 -3" stroke="#fff" stroke-width="0.800"/>
<path d="M197 318.800 l2.300 -2.300 2.300 2.300" stroke="#ddd" stroke-width="0.900"/>
<path d="M488.500 314.600 l1.800 2 1.800 -2z" fill="#e6e6e6"/>
<path d="M614 326 v1 M612.300 327.500 v1 M614 327.500 v1 M610.600 329 v1 M612.300 329 v1 M614 329 v1" stroke="#aaa" stroke-width="0.900"/>
</svg>
</div>
</body></html>
